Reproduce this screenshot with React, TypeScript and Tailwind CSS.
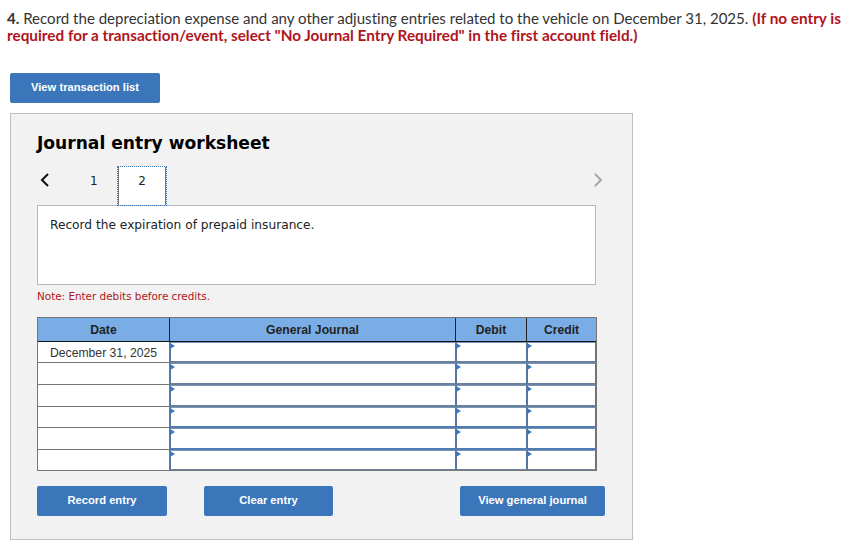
const rows = [
  { date: 'December 31, 2025', line: 'border-b-2 border-b-[#697f9b]', dateLine: 'border-b border-b-[#767676]' },
  { date: '', line: 'border-b-2 border-b-[#697f9b]', dateLine: 'border-b border-b-[#767676]' },
  { date: '', line: 'border-b-2 border-b-[#697f9b]', dateLine: 'border-b border-b-[#767676]' },
  { date: '', line: 'border-b-2 border-b-[#4f7cb5]', dateLine: 'border-b border-b-[#767676]' },
  { date: '', line: 'border-b-2 border-b-[#4f7cb5]', dateLine: 'border-b border-b-[#767676]' },
  { date: '', line: 'border-b border-b-[#6d86a6]', dateLine: '' },
];

const ActionButton = ({ label, width }: { label: string; width: string }) => {
  return (
    <button className={`h-[30px] ${width} rounded-[2px] bg-[#3b76ba] pb-[2px] text-center font-['Liberation_Sans',sans-serif] text-[11.2px] font-bold text-white`}>
      {label}
    </button>
  );
};

const EntryCell = ({ line }: { line: string }) => {
  return (
    <div className={`relative border-x border-t border-x-[#55779f] border-t-[#7a94b6] bg-white ${line}`}>
      <svg className="absolute left-[-1px] top-0" width="5" height="6" viewBox="0 0 5 6">
        <path d="M0 0 L5 3 L0 6 Z" fill="#3b76ba" />
      </svg>
    </div>
  );
};

const HeaderCell = ({ label, last }: { label: string; last?: boolean }) => {
  return (
    <div className={`flex items-center justify-center border-b border-b-[#111] bg-[#7aade6] pt-[1px] font-bold text-[#222] ${last ? '' : 'border-r border-r-[#222]'}`}>
      {label}
    </div>
  );
};

export default function App() {
  return (
    <main className="h-[548px] w-[859px] overflow-hidden bg-white font-['Lato',sans-serif] text-[#333]">
      <p className="w-[845px] pl-[7px] pt-[10px] text-[15.05px] leading-[17px] [font-variant-ligatures:none]">
        <strong>4.</strong> Record the depreciation expense and any other adjusting entries related to the vehicle on December 31, 2025.{' '}
        <strong className="text-[15.3px] text-[#b0141c]">
          (If no entry is required for a transaction/event, select "No Journal Entry Required" in the first account field.)
        </strong>
      </p>

      <div className="ml-[10px] mt-[29px] flex">
        <ActionButton label="View transaction list" width="w-[150px]" />
      </div>

      <section className="ml-[10px] mt-[10px] h-[427px] w-[623px] border border-[#c0c0c0] bg-[#f2f2f2] pl-[26px] pt-[18px] font-['DejaVu_Sans',sans-serif]">
        <h2 className="text-[17.1px] font-bold leading-[22px] text-black">Journal entry worksheet</h2>

        <div className="mt-[13px] flex h-[38px] w-[559px] items-start text-[12px] leading-[28px] text-[#222]">
          <svg className="ml-[2px] mt-[5px]" width="12" height="16" viewBox="0 0 12 16">
            <path d="M9 2 L3 8 L9 14" fill="none" stroke="#111" strokeWidth="2" />
          </svg>
          <span className="ml-[39px] w-[8px]">1</span>
          <div className="relative z-10 ml-[20px] flex h-[38px] w-[48px] justify-center border-x border-x-[#767676] bg-white outline outline-1 outline-dotted outline-[#3b76ba]">
            2
          </div>
          <svg className="ml-auto mr-[-8px] mt-[5px]" width="12" height="16" viewBox="0 0 12 16">
            <path d="M3 2 L9 8 L3 14" fill="none" stroke="#a8a8a8" strokeWidth="2" />
          </svg>
        </div>

        <div className="h-[80px] w-[559px] border border-[#b8b8b8] bg-white px-[12px] pt-[11px] text-[12.2px] leading-[16px] text-[#222]">
          Record the expiration of prepaid insurance.
        </div>

        <p className="mt-[4px] text-[10.4px] leading-[14px] text-[#b0141c]">Note: Enter debits before credits.</p>

        <div className="mt-[14px] grid w-[560px] grid-cols-[132px_286px_71px_69px] grid-rows-[24px_21px_22px_22px_21px_22px_20px] border border-[#767676] font-['Liberation_Sans',sans-serif] text-[12.2px]">
          <HeaderCell label="Date" />
          <HeaderCell label="General Journal" />
          <HeaderCell label="Debit" />
          <HeaderCell label="Credit" last />
          {rows.map((row, i) => (
            <div key={i} className="contents">
              <div className={`flex items-center justify-center border-r border-r-[#767676] bg-white pt-[2px] text-[#333] ${row.dateLine}`}>{row.date}</div>
              <EntryCell line={row.line} />
              <EntryCell line={row.line} />
              <EntryCell line={row.line} />
            </div>
          ))}
        </div>

        <div className="mt-[15px] flex">
          <ActionButton label="Record entry" width="w-[130px]" />
          <div className="ml-[37px] flex">
            <ActionButton label="Clear entry" width="w-[129px]" />
          </div>
          <div className="ml-[127px] flex">
            <ActionButton label="View general journal" width="w-[145px]" />
          </div>
        </div>
      </section>
    </main>
  );
}
